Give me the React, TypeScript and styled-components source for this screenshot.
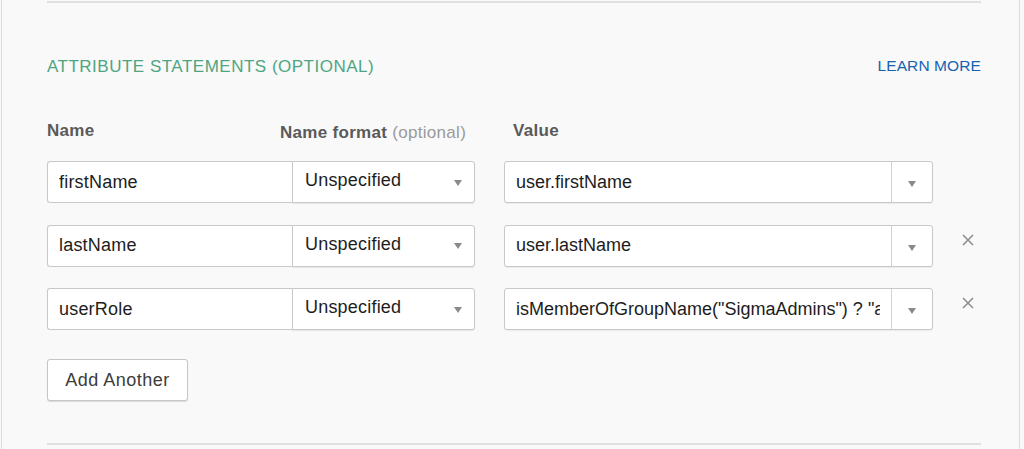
import styled, { createGlobalStyle } from 'styled-components';

const GlobalStyle = createGlobalStyle`
  html, body {
    margin: 0;
    padding: 0;
    background: #f9f9f9;
  }
  body {
    font-family: 'Liberation Sans', Arial, sans-serif;
    color: #1d1d21;
  }
`;

const Panel = styled.section`
  margin-left: 1px;
  width: 1019px;
  height: 449px;
  box-sizing: border-box;
  background: #f9f9f9;
  border-left: 1px solid #dcdcdc;
  border-right: 1px solid #dcdcdc;
  padding: 1px 41px 0 45px;
  display: flex;
  flex-direction: column;
`;

const Separator = styled.hr`
  margin: 0;
  border: 0;
  height: 2px;
  width: 934px;
  background: #e0e0e0;
`;

const SectionHeader = styled.div`
  display: flex;
  justify-content: space-between;
  align-items: center;
  width: 934px;
  margin-top: 54px;
  height: 20px;
`;

const Title = styled.h2`
  margin: 0;
  font-size: 17px;
  font-weight: 400;
  color: #4ea582;
  letter-spacing: 0.5px;
`;

const LearnMore = styled.a`
  font-size: 15.5px;
  color: #1662b1;
  text-decoration: none;
  letter-spacing: 0.1px;
  margin-top: -2px;
`;

const Grid = styled.div`
  display: grid;
  grid-template-columns: 245px 183px 429px 50px;
`;

const HeaderRow = styled(Grid)`
  margin-top: 42px;
  height: 20px;
  align-items: center;
`;

const ColLabel = styled.div<{ $shift?: number; $drop?: number }>`
  font-size: 17px;
  font-weight: 700;
  color: #5a5a5a;
  letter-spacing: 0.3px;
  margin-left: ${(p) => p.$shift ?? 0}px;
  padding-top: ${(p) => p.$drop ?? 0}px;
  white-space: nowrap;
`;

const Optional = styled.span`
  font-weight: 400;
  color: #9a9a9a;
`;

const Rows = styled.div`
  display: flex;
  flex-direction: column;
  gap: 21.5px;
  margin-top: 22px;
`;

const Row = styled(Grid)`
  height: 42px;
  align-items: center;
`;

const fieldText = `
  font-family: 'Liberation Sans', Arial, sans-serif;
  font-size: 18px;
  letter-spacing: 0.2px;
  color: #1d1d21;
`;

const TextInput = styled.input`
  ${fieldText}
  width: 100%;
  height: 42px;
  box-sizing: border-box;
  background: #fff;
  border: 1px solid #c8c8c8;
  border-right: 0;
  border-radius: 3px 0 0 3px;
  padding: 0 11px;
  outline: none;
`;

const Select = styled.div`
  ${fieldText}
  height: 42px;
  box-sizing: border-box;
  background: #fff;
  border: 1px solid #c8c8c8;
  border-radius: 0 3px 3px 0;
  box-shadow: 0 1px 1px rgba(0, 0, 0, 0.08);
  padding: 0 12px 3px 12px;
  display: flex;
  align-items: center;
  justify-content: space-between;
`;

const Caret = styled.span`
  width: 0;
  height: 0;
  border-left: 4.5px solid transparent;
  border-right: 4.5px solid transparent;
  border-top: 6px solid #8a8a8a;
  margin-top: 4px;
`;

const ValueBox = styled.div`
  margin-left: 29px;
  width: 429px;
  height: 42px;
  box-sizing: border-box;
  background: #fff;
  border: 1px solid #c8c8c8;
  border-radius: 3px;
  box-shadow: 0 1px 1px rgba(0, 0, 0, 0.06);
  display: flex;
  overflow: hidden;
`;

const ValueInput = styled.input`
  ${fieldText}
  letter-spacing: 0;
  flex: 1;
  min-width: 0;
  border: 0;
  background: transparent;
  padding: 0 11px;
  outline: none;
`;

const Toggle = styled.div`
  width: 40px;
  border-left: 1px solid #d3d3d3;
  display: flex;
  align-items: center;
  justify-content: center;
`;

const RemoveButton = styled.button`
  margin-left: 56px;
  width: 16px;
  height: 16px;
  padding: 0;
  border: 0;
  background: none;
  display: flex;
  align-items: center;
  justify-content: center;
  align-self: start;
  margin-top: 7px;
  cursor: pointer;
`;

const AddButton = styled.button`
  margin-top: 29px;
  width: 141px;
  height: 42px;
  box-sizing: border-box;
  background: #fff;
  border: 1px solid #c6c6c6;
  border-radius: 3px;
  box-shadow: 0 1px 1px rgba(0, 0, 0, 0.12);
  font-family: 'Liberation Sans', Arial, sans-serif;
  font-size: 18px;
  letter-spacing: 0.5px;
  color: #3c3c3c;
  padding: 0;
  cursor: pointer;
`;

const BottomSeparator = styled(Separator)`
  margin-top: 42px;
`;

const CloseIcon = () => (
  <svg width="12" height="12" viewBox="0 0 12 12">
    <path d="M1 1 L11 11 M11 1 L1 11" stroke="#8f8f8f" strokeWidth="1.6" />
  </svg>
);

const rows = [
  { name: 'firstName', value: 'user.firstName', removable: false },
  { name: 'lastName', value: 'user.lastName', removable: true },
  {
    name: 'userRole',
    value: 'isMemberOfGroupName("SigmaAdmins") ? "admin" : "viewer"',
    removable: true,
  },
];

const App = () => {
  return (
    <>
      <GlobalStyle />
      <Panel>
        <Separator />
        <SectionHeader>
          <Title>ATTRIBUTE STATEMENTS (OPTIONAL)</Title>
          <LearnMore href="#">LEARN MORE</LearnMore>
        </SectionHeader>
        <HeaderRow>
          <ColLabel>Name</ColLabel>
          <ColLabel $shift={-12} $drop={4}>
            Name format <Optional>(optional)</Optional>
          </ColLabel>
          <ColLabel $shift={38}>Value</ColLabel>
        </HeaderRow>
        <Rows>
          {rows.map((r) => (
            <Row key={r.name}>
              <TextInput readOnly value={r.name} />
              <Select>
                Unspecified
                <Caret />
              </Select>
              <ValueBox>
                <ValueInput readOnly value={r.value} />
                <Toggle>
                  <Caret />
                </Toggle>
              </ValueBox>
              {r.removable && (
                <RemoveButton aria-label="Remove">
                  <CloseIcon />
                </RemoveButton>
              )}
            </Row>
          ))}
        </Rows>
        <div>
          <AddButton>Add Another</AddButton>
        </div>
        <BottomSeparator />
      </Panel>
    </>
  );
};

export default App;
